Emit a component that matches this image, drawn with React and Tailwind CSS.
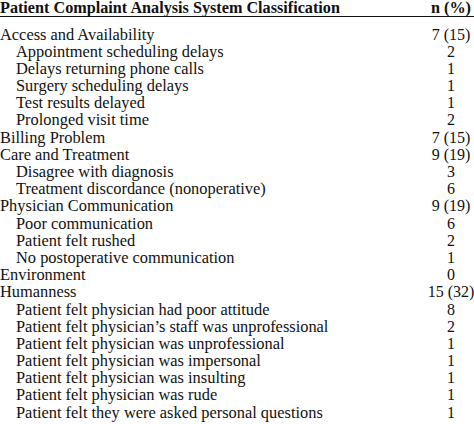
import React from "react";

const rows = [
  ["Access and Availability", "7 (15)", 0],
  ["Appointment scheduling delays", "2", 1],
  ["Delays returning phone calls", "1", 1],
  ["Surgery scheduling delays", "1", 1],
  ["Test results delayed", "1", 1],
  ["Prolonged visit time", "2", 1],
  ["Billing Problem", "7 (15)", 0],
  ["Care and Treatment", "9 (19)", 0],
  ["Disagree with diagnosis", "3", 1],
  ["Treatment discordance (nonoperative)", "6", 1],
  ["Physician Communication", "9 (19)", 0],
  ["Poor communication", "6", 1],
  ["Patient felt rushed", "2", 1],
  ["No postoperative communication", "1", 1],
  ["Environment", "0", 0],
  ["Humanness", "15 (32)", 0],
  ["Patient felt physician had poor attitude", "8", 1],
  ["Patient felt physician\u2019s staff was unprofessional", "2", 1],
  ["Patient felt physician was unprofessional", "1", 1],
  ["Patient felt physician was impersonal", "1", 1],
  ["Patient felt physician was insulting", "1", 1],
  ["Patient felt physician was rude", "1", 1],
  ["Patient felt they were asked personal questions", "1", 1],
];

export default function App() {
  return (
    <div
      className="w-[474px] h-[424px] overflow-hidden bg-white text-[#111]"
      style={{ fontFamily: '"Liberation Serif", "Times New Roman", serif' }}
    >
      <div className="flex h-[16px] items-start border-b-[1.5px] border-[#111] font-bold text-[16.2px] leading-[16px] box-content">
        <div className="flex-1 whitespace-nowrap">Patient Complaint Analysis System Classification</div>
        <div className="w-[46px] flex justify-center whitespace-nowrap">n (%)</div>
      </div>
      <div className="pt-[8.5px]">
        {rows.map(([label, n, indent], i) => (
          <div key={i} className="flex h-[17.2px] leading-[17.2px]">
            <div className={"flex-1 whitespace-nowrap text-[16.4px] " + (indent ? "pl-[16px]" : "")}>{label}</div>
            <div className="w-[46px] flex justify-center whitespace-nowrap text-[16px]">{n}</div>
          </div>
        ))}
      </div>
    </div>
  );
}
